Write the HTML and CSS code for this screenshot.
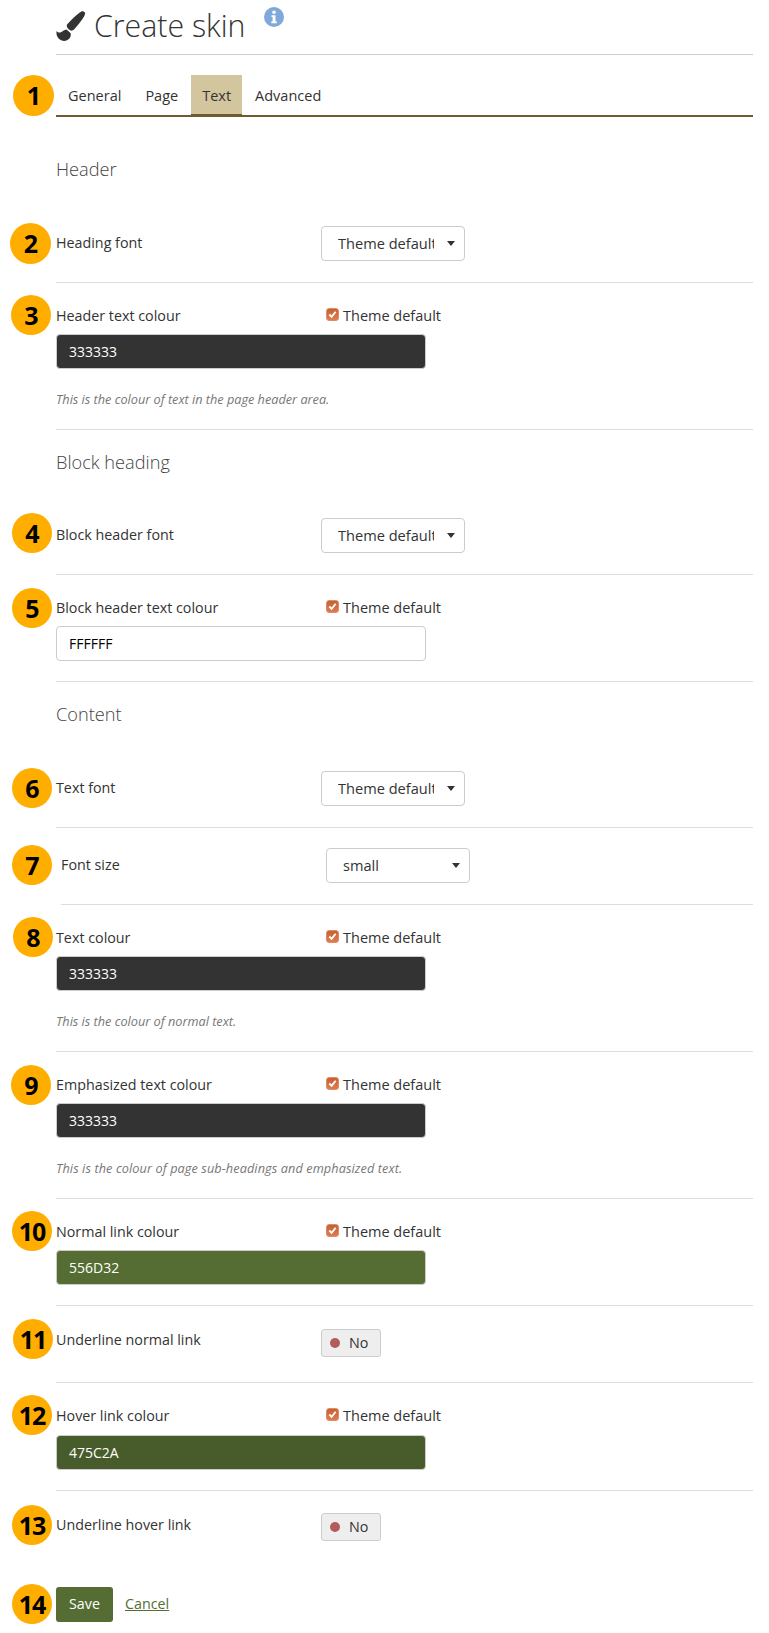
FILE: index.html
```html
<!DOCTYPE html>
<html lang="en">
<head>
<meta charset="utf-8">
<title>Create skin</title>
<link rel="stylesheet" href="styles.css">
</head>
<body>
<main class="page">
  <header class="title-bar">
    <svg class="brush" viewBox="0 0 30 30" aria-hidden="true"><path d="M25.500.5C27.500-.5 29.500 1 29 3 28 7 22 14 18 18.500 16.500 20 14.500 20 13 18.500L11.500 17C10.500 15.500 10.500 14 11.500 13 15 9 21 3 25.500.5z"/><path d="M.5 20C1.500 21.500 3.500 22 5.500 21 7 20 8 19 10.500 18.500L14.500 22C15.500 25 14 28 11 29.300 7 31 2.500 29 1 25 .5 23.500.3 21.500.5 20z"/></svg>
    <h1>Create skin</h1>
    <svg class="info" viewBox="0 0 20 20" aria-hidden="true"><circle cx="10" cy="10" r="10"/><circle class="i" cx="10" cy="5.300" r="1.800"/><path class="i" d="M7.500 8.300h4v6.200h1.300v1.700H7.300v-1.700h1.300V10H7.500z"/></svg>
  </header>

  <nav class="tabs-row">
    <span class="badge b1">1</span>
    <a class="tab">General</a><a class="tab">Page</a><a class="tab active">Text</a><a class="tab">Advanced</a>
  </nav>

  <h2 class="section first">Header</h2>

  <div class="row select-row header-first"><span class="badge b2">2</span><label>Heading font</label><div class="select"><span>Theme default</span><i></i></div></div>

  <div class="row colour"><span class="badge b3">3</span>
    <div class="colour-top"><label>Header text colour</label><span class="tick"><b class="box"><svg viewBox="0 0 12 12"><path d="M2.500 6l2.500 2.500 4.500-5.500"/></svg></b>Theme default</span></div>
    <div class="swatch dark">333333</div>
    <p class="hint">This is the colour of text in the page header area.</p>
  </div>

  <h2 class="section">Block heading</h2>

  <div class="row select-row"><span class="badge b4">4</span><label>Block header font</label><div class="select"><span>Theme default</span><i></i></div></div>

  <div class="row colour"><span class="badge b5">5</span>
    <div class="colour-top"><label>Block header text colour</label><span class="tick"><b class="box"><svg viewBox="0 0 12 12"><path d="M2.500 6l2.500 2.500 4.500-5.500"/></svg></b>Theme default</span></div>
    <div class="swatch white">FFFFFF</div>
  </div>

  <h2 class="section">Content</h2>

  <div class="row select-row content-first"><span class="badge b6">6</span><label>Text font</label><div class="select"><span>Theme default</span><i></i></div></div>

  <div class="row select-row indented"><span class="badge b7">7</span><label>Font size</label><div class="select"><span>small</span><i></i></div></div>

  <div class="row colour"><span class="badge b8">8</span>
    <div class="colour-top"><label>Text colour</label><span class="tick"><b class="box"><svg viewBox="0 0 12 12"><path d="M2.500 6l2.500 2.500 4.500-5.500"/></svg></b>Theme default</span></div>
    <div class="swatch dark">333333</div>
    <p class="hint">This is the colour of normal text.</p>
  </div>

  <div class="row colour"><span class="badge b9">9</span>
    <div class="colour-top"><label>Emphasized text colour</label><span class="tick"><b class="box"><svg viewBox="0 0 12 12"><path d="M2.500 6l2.500 2.500 4.500-5.500"/></svg></b>Theme default</span></div>
    <div class="swatch dark">333333</div>
    <p class="hint wide">This is the colour of page sub-headings and emphasized text.</p>
  </div>

  <div class="row colour"><span class="badge b10">10</span>
    <div class="colour-top"><label>Normal link colour</label><span class="tick"><b class="box"><svg viewBox="0 0 12 12"><path d="M2.500 6l2.500 2.500 4.500-5.500"/></svg></b>Theme default</span></div>
    <div class="swatch green">556D32</div>
  </div>

  <div class="row switch-row"><span class="badge b11">11</span><label>Underline normal link</label><div class="switch"><i></i>No</div></div>

  <div class="row colour hover"><span class="badge b12">12</span>
    <div class="colour-top"><label>Hover link colour</label><span class="tick"><b class="box"><svg viewBox="0 0 12 12"><path d="M2.500 6l2.500 2.500 4.500-5.500"/></svg></b>Theme default</span></div>
    <div class="swatch moss">475C2A</div>
  </div>

  <div class="row switch-row last"><span class="badge b13">13</span><label>Underline hover link</label><div class="switch"><i></i>No</div></div>

  <div class="actions"><span class="badge b14">14</span><button class="save" type="button">Save</button><a class="cancel">Cancel</a></div>
</main>
</body>
</html>
```
FILE: styles.css
```css
html, body { margin: 0; padding: 0; background: #fff; }
body { font-family: "Open Sans", "Noto Sans", sans-serif; font-size: 14.3px; line-height: 20px; color: #333; }
.page { margin: 0 16px 0 56px; padding-bottom: 11px; }

.title-bar { display: flex; height: 55px; box-sizing: border-box; border-bottom: 1px solid #ccc; position: relative; }
.brush { width: 30px; height: 30px; fill: #333; margin-top: 11px; flex: none; }
h1 { margin: 6px 0 0 8px; font-size: 30.300px; line-height: 40px; font-weight: 300; color: #333; }
.info { position: absolute; left: 208px; top: 7px; width: 20px; height: 20px; fill: #80a9da; }
.info .i { fill: #fff; }

.tabs-row { display: flex; height: 40px; margin-top: 20px; border-bottom: 2px solid #6e5b30; position: relative; }
.tab { padding: 1px 12px 0; line-height: 39px; height: 40px; box-sizing: border-box; font-size: 14.5px; }
.tab.active { padding: 1px 11px 0; margin: 0 1px; background: #d3c69f; box-shadow: inset 0 -1px 0 #6e5b30; }

.badge { position: absolute; width: 40px; height: 40px; border-radius: 50%; background: #ffae00; color: #000; font-weight: 700; font-size: 25px; line-height: 40px; text-align: center; letter-spacing: -1px; }
.b1 { left: -43px; top: 0; width: 41px; height: 41px; line-height: 41px; }
.b2 { left: -46px; top: 42px; width: 41px; height: 41px; line-height: 41px; }
.b3 { left: -45px; top: 12px; }
.b4 { left: -44px; top: 39px; }
.b5 { left: -44px; top: 13px; }
.b6 { left: -44px; top: 42px; }
.b7 { left: -49px; top: 17px; }
.b8 { left: -43px; top: 12px; }
.b9 { left: -45px; top: 13px; }
.b10 { left: -44px; top: 12px; }
.b11 { left: -43px; top: 13px; }
.b12 { left: -44px; top: 12px; }
.b13 { left: -44px; top: 14px; }
.b14 { left: -44px; top: -3px; }

.section { margin: 0; padding-top: 20px; font-size: 18.2px; font-weight: 300; line-height: 24px; color: #444; }
.section.first { padding-top: 40px; }

.row { position: relative; border-bottom: 1px solid #ddd; }

.select-row { display: flex; align-items: center; padding: 44px 0 21px; }
.header-first, .content-first { padding-top: 45px; }
.indented { margin-left: 5px; padding-top: 20px; }
.select-row label { width: 265px; flex: none; margin-top: -1px; }
.select { box-sizing: border-box; width: 144px; height: 35px; border: 1px solid #ccc; border-radius: 4px; padding-left: 16px; display: flex; align-items: center; }
.select span { width: 96px; overflow: hidden; white-space: nowrap; flex: none; font-size: 14.600px; margin-top: -1px; }
.select i { margin-left: 13px; border-left: 4.500px solid transparent; border-right: 4.500px solid transparent; border-top: 5px solid #333; }

.colour { padding: 23px 0 20px; }
.colour-top { display: flex; height: 20px; }
.colour-top label { width: 270px; flex: none; }
.tick { display: flex; align-items: center; font-size: 14.500px; }
.box { box-sizing: border-box; width: 13px; height: 13px; border-radius: 3px; background: linear-gradient(#c9602f, #dd7c52); border: 1px solid #e08b65; margin: -4px 4px 0 0; display: block; }
.box svg { display: block; width: 11px; height: 11px; fill: none; stroke: #fff; stroke-width: 2; }
.swatch { box-sizing: border-box; width: 370px; height: 35px; margin-top: 8px; border: 1px solid #ccc; border-radius: 4px; padding-left: 12px; font-size: 14px; line-height: 33px; color: #fff; }
.hover .swatch { margin-top: 9px; }
.dark { background: #333; }
.green { background: #556d32; }
.moss { background: #475c2a; }
.white { background: #fff; color: #000; }
.hint { margin: 20px 0 0; font-size: 12.7px; font-style: italic; line-height: 20px; color: #777; }
.hint.wide { letter-spacing: .1px; }

.switch-row { display: flex; align-items: flex-start; padding: 23px 0 25px; }
.switch-row label { width: 265px; flex: none; margin-top: 1px; }
.switch-row.last { padding: 22px 0 46px; border-bottom: 0; }
.last label { margin-top: 2px; }
.switch { box-sizing: border-box; width: 60px; height: 28px; background: #eee; border: 1px solid #ccc; border-radius: 3px; display: flex; align-items: center; padding-left: 8px; gap: 9px; }
.switch i { width: 10px; height: 10px; border-radius: 50%; background: #b35c5c; }

.actions { display: flex; align-items: center; position: relative; height: 35px; }
.save { box-sizing: border-box; width: 57px; height: 35px; background: #556d32; color: #fff; border: 0; border-radius: 3px; font: inherit; padding: 0 0 2px; }
.cancel { margin: -2px 0 0 12px; color: #556d32; text-decoration: underline; }
```
